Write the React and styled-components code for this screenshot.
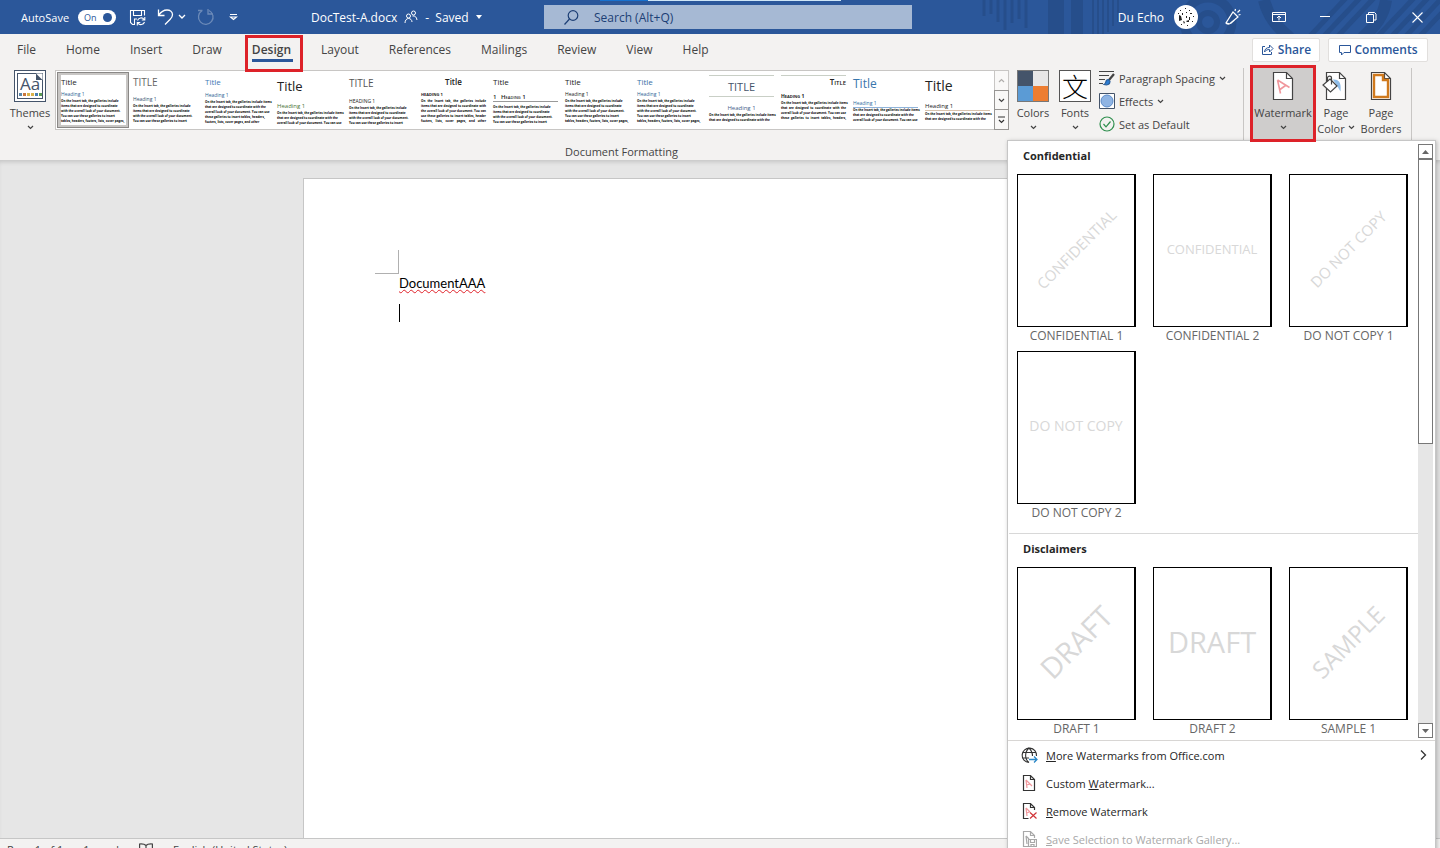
import React from "react";
import styled, { createGlobalStyle, css } from "styled-components";

const GlobalStyle = createGlobalStyle`
  * { box-sizing: border-box; }
  html, body { margin: 0; height: 100%; overflow: hidden; }
  body { font-family: "Open Sans", "Noto Sans", sans-serif; font-size: 11px; color: #444; background: #e6e6e6; }
  button, input { font: inherit; color: inherit; }
  button { background: none; border: 0; padding: 0; margin: 0; white-space: nowrap; }
  svg { display: block; flex: none; }
`;

const Shell = styled.div`
  position: relative;
  display: flex;
  flex-direction: column;
  height: calc(100vh + 12px);
`;

/* ---------- title bar ---------- */
const TitleBar = styled.header`
  position: relative;
  display: grid;
  grid-template-columns: 544fr 368fr 528fr;
  height: 34px;
  background: #2b579a;
  color: #fff;
  font-size: 12px;
`;
const TitlePattern = styled.svg`
  position: absolute;
  right: 0;
  top: 0;
`;
const TitleLeft = styled.div`
  display: flex;
  align-items: center;
  padding-left: 21px;
`;
const AutoSave = styled.label`
  display: flex;
  align-items: center;
  font-size: 11px;
  width: 108px;
  justify-content: space-between;
  padding-right: 13px;
`;
const Toggle = styled.span`
  position: relative;
  display: flex;
  align-items: center;
  width: 38px;
  height: 15px;
  padding-left: 6px;
  border-radius: 8px;
  background: #fff;
  color: #2b579a;
  font-size: 9px;
  input { position: absolute; inset: 0; margin: 0; opacity: 0; }
  &::after {
    content: "";
    position: absolute;
    right: 4px;
    top: 3px;
    width: 9px;
    height: 9px;
    border-radius: 50%;
    background: #2b579a;
  }
`;
const TitleButton = styled.button`
  display: flex;
  align-items: center;
  justify-content: center;
  width: ${(p) => p.$w}px;
  height: 34px;
  opacity: ${(p) => (p.$dim ? 0.3 : 1)};
`;
const DocName = styled.div`
  display: flex;
  align-items: center;
  gap: 7px;
  margin-left: 60px;
  font-size: 12px;
  white-space: nowrap;
`;
const SearchArea = styled.div`
  position: relative;
  display: flex;
  align-items: center;
`;
const ProgressStrip = styled.div`
  position: absolute;
  left: 56px;
  top: 0;
  width: 241px;
  height: 1px;
  background: #cfe6f7;
  border-left: 48px solid #1771cf;
`;
const SearchBox = styled.label`
  display: flex;
  align-items: center;
  gap: 15px;
  width: 100%;
  height: 24px;
  padding-left: 20px;
  background: #a6b9d4;
  color: #1d3f75;
  input {
    flex: 1;
    border: 0;
    padding: 0;
    background: none;
    outline: none;
    font-size: 12px;
  }
  input::placeholder { color: #1d3f75; opacity: 1; }
`;
const TitleRight = styled.div`
  position: relative;
  display: flex;
  align-items: center;
  justify-content: flex-end;
`;
const UserName = styled.span`
  font-size: 12px;
  margin-right: 10px;
`;
const Avatar = styled.svg`
  margin-right: 12px;
`;

/* ---------- tab strip ---------- */
const TabStrip = styled.nav`
  display: flex;
  align-items: center;
  height: 31px;
  padding: 0 12px 0 2px;
  background: #f3f2f1;
`;
const Tab = styled.button`
  position: relative;
  height: 31px;
  padding: 0 15px;
  font-size: 12px;
  font-weight: ${(p) => (p.$active ? 600 : 400)};
  ${(p) =>
    p.$active &&
    css`
      &::before {
        content: "";
        position: absolute;
        left: 15px;
        right: 13px;
        bottom: 3px;
        height: 3px;
        background: #2b579a;
      }
      &::after {
        content: "";
        position: absolute;
        left: 8px;
        right: 3px;
        top: 1px;
        height: 31px;
        border: 3px solid #dd2229;
        z-index: 2;
      }
    `}
`;
const StripActions = styled.div`
  display: flex;
  gap: 8px;
  margin-left: auto;
`;
const StripAction = styled.button`
  display: flex;
  align-items: center;
  justify-content: center;
  gap: 4px;
  width: ${(p) => p.$w}px;
  height: 24px;
  background: #fff;
  border: 1px solid #e1dfdd;
  border-radius: 2px;
  color: #2b579a;
  font-size: 12px;
  font-weight: 600;
`;

/* ---------- ribbon ---------- */
const Ribbon = styled.section`
  display: flex;
  height: 95px;
  padding: 3px 28px 0 0;
  background: #f3f2f1;
  flex: none;
`;
const Group = styled.div`
  display: flex;
  flex-direction: column;
  flex: ${(p) => (p.$grow ? "1 1 0" : "0 0 168px")};
  min-width: 0;
  height: 92px;
  border-right: 1px solid #c8c6c4;
`;
const Tools = styled.div`
  display: flex;
  flex: none;
  padding-top: 2px;
  height: 75px;
`;
const GroupLabel = styled.div`
  text-align: center;
  font-size: 11px;
  line-height: 17px;
`;
const BigButton = styled.button`
  position: relative;
  display: flex;
  flex-direction: column;
  align-items: center;
  width: ${(p) => p.$w}px;
  line-height: 16px;
  svg, i { margin-bottom: 3px; }
`;
const ThemesButton = styled(BigButton)`
  margin-left: 5px;
`;
const LabelLine = styled.span`
  display: flex;
  align-items: center;
  justify-content: center;
  gap: 3px;
  height: 16px;
`;
const WatermarkButton = styled(BigButton)`
  height: 77px;
  margin: -5px 0 0 6px;
  padding-top: 2px;
  background: #cfcdcc;
  border: 3px solid #dd2229;
  z-index: 5;
`;
const Swatches = styled.i`
  display: grid;
  grid-template-columns: 1fr 1fr;
  width: 32px;
  height: 32px;
  border: 1px solid #777;
  b:nth-child(1) { background: #44546a; }
  b:nth-child(2) { background: #e7e6e6; }
  b:nth-child(3) { background: #5b9bd5; }
  b:nth-child(4) { background: #ed7d31; }
`;
const FontGlyph = styled.i`
  width: 32px;
  height: 32px;
  border: 1px solid #555;
  background: #fff;
  color: #000;
  font: normal 300 26px/30px "Noto Sans CJK SC", sans-serif;
`;
const ThemeGlyph = styled.i`
  position: relative;
  width: 32px;
  height: 32px;
  border: 1px solid #44546a;
  box-shadow: inset 0 0 0 2px #fff, inset 0 0 0 3px #44546a;
  background: #fff;
  color: #44546a;
  font: normal 400 17px/26px "Open Sans", sans-serif;
  text-align: center;
  svg { position: absolute; left: 0; top: 0; }
`;
const SmallColumn = styled.div`
  display: flex;
  flex-direction: column;
  gap: 5px;
  margin: -1px 0 0 1px;
`;
const SmallButton = styled.button`
  display: flex;
  align-items: center;
  gap: 4px;
  height: 18px;
`;

/* ---------- style gallery ---------- */
const Gallery = styled.div`
  display: flex;
  height: 60px;
  flex: none;
  border: 1px solid #c8c6c4;
  background: #fff;
  margin-right: 5px;
`;
const GalleryList = styled.div`
  display: flex;
  padding: 1px 0 0 1px;
`;
const Thumb = styled.button`
  width: 72px;
  height: 56px;
  text-align: left;
  padding: 3px 3px 3px 4px;
  background: ${(p) => (p.$selected ? "#c8c6c4" : "#fff")};
  box-shadow: ${(p) => (p.$selected ? "inset 0 0 0 1px #8a8886" : "none")};
`;
const Sheet = styled.span`
  display: block;
  height: 50px;
  padding-top: ${(p) => p.$top}px;
  background: #fff;
  border-top: 1px solid ${(p) => (p.$rule ? "#c9cfc6" : "#fff")};
`;
const SheetTitle = styled.span`
  display: block;
  height: 12px;
  line-height: 12px;
  font-size: ${(p) => p.$size}px;
  font-weight: ${(p) => p.$weight};
  font-variant: ${(p) => (p.$caps ? "small-caps" : "normal")};
  color: ${(p) => p.$color};
  text-align: ${(p) => p.$align};
`;
const TitleRule = styled.span`
  display: block;
  height: 1px;
  margin: 3px 0 -4px;
  background: #c9cfc6;
`;
const SheetHeading = styled.span`
  display: block;
  height: 8px;
  line-height: 7px;
  margin-top: ${(p) => p.$gap}px;
  margin-bottom: ${(p) => p.$after}px;
  font-size: ${(p) => p.$size}px;
  font-weight: ${(p) => p.$weight};
  font-variant: ${(p) => (p.$caps ? "small-caps" : "normal")};
  color: ${(p) => p.$color};
  text-align: ${(p) => p.$align};
  white-space: pre;
  border-bottom: ${(p) => (p.$line ? `1px solid ${p.$line}` : "0")};
`;
const SheetBody = styled.span`
  display: block;
  font-family: "Open Sans", sans-serif;
  font-size: 3px;
  font-weight: 700;
  line-height: 5px;
  color: #000;
  span { display: block; text-align-last: ${(p) => (p.$justify ? "justify" : "left")}; }
`;
const GalleryScroll = styled.div`
  display: flex;
  flex-direction: column;
  width: 15px;
  margin: -1px;
  margin-left: 1px;
  button {
    display: flex;
    align-items: center;
    justify-content: center;
    flex: 1;
    border: 1px solid #979593;
    margin-bottom: -1px;
    background: #f9f8f7;
  }
  button:first-child { border-color: #c8c6c4; }
  button:last-child { margin-bottom: 0; }
`;

/* ---------- workspace ---------- */
const Workspace = styled.main`
  flex: 1;
  display: flex;
  justify-content: center;
  padding: 18px 18px 0 0;
  background: #e6e6e6;
  box-shadow: inset 0 4px 4px -2px #c4c4c4;
  overflow: hidden;
`;
const Page = styled.article`
  width: 816px;
  padding: 71px 71px 0;
  background: #fff;
  border: 1px solid #c6c6c6;
  border-bottom: 0;
`;
const MarginCorner = styled.div`
  width: 24px;
  height: 24px;
  border: solid #b0b0b0;
  border-width: 0 1px 1px 0;
`;
const Paragraph = styled.p`
  margin: 0 0 12px 24px;
  font-family: Lato, sans-serif;
  font-size: 13px;
  line-height: 18px;
  color: #000;
  span { text-decoration: underline wavy #e0222a 1px; text-underline-offset: 1px; text-decoration-skip-ink: none; }
`;
const TextCaret = styled.div`
  width: 1px;
  height: 18px;
  margin-left: 24px;
  background: #000;
`;
const StatusBar = styled.footer`
  display: flex;
  align-items: center;
  gap: 20px;
  height: 22px;
  padding-left: 7px;
  background: #f3f2f1;
  border-top: 1px solid #c6c6c6;
  font-size: 11px;
  white-space: nowrap;
`;

/* ---------- watermark menu ---------- */
const Menu = styled.aside`
  position: absolute;
  right: 4px;
  top: 140px;
  bottom: 0;
  width: 429px;
  display: flex;
  flex-direction: column;
  background: #fff;
  border: 1px solid #c6c6c6;
  box-shadow: 1px 1px 4px rgba(0, 0, 0, 0.25);
  color: #262626;
  z-index: 3;
`;
const MenuScroller = styled.div`
  display: flex;
  height: 600px;
  flex: none;
  border-bottom: 1px solid #d8d6d4;
  overflow: hidden;
`;
const MenuSections = styled.div`
  flex: 1;
  padding-left: 1px;
  overflow: hidden;
`;
const Section = styled.section`
  padding: 0 0 5px 8px;
  & + & { border-top: 1px solid #d8d8d8; }
`;
const SectionTitle = styled.h2`
  margin: 0;
  padding-left: 6px;
  height: 33px;
  line-height: 30px;
  font-size: 11px;
  font-weight: 700;
`;
const Cards = styled.div`
  display: grid;
  grid-template-columns: repeat(3, 119px);
  column-gap: 17px;
`;
const Card = styled.button`
  display: flex;
  flex-direction: column;
  justify-content: flex-start;
  align-items: stretch;
  height: 177px;
  color: #666;
  font-size: 12px;
  line-height: 18px;
  text-align: center;
`;
const Preview = styled.span`
  display: flex;
  align-items: center;
  justify-content: center;
  height: 153px;
  flex: none;
  padding-bottom: 4px;
  border: 1px solid #000;
  border-right-width: 2px;
  color: #d8d8d8;
  font-size: ${(p) => p.$size}px;
  span { transform: rotate(${(p) => (p.$diagonal ? -45 : 0)}deg); }
`;
const ScrollTrack = styled.div`
  display: flex;
  flex-direction: column;
  width: 15px;
  margin: 3px 2px 2px 0;
  background: #e6e6e6;
`;
const ScrollButton = styled.button`
  display: flex;
  align-items: center;
  justify-content: center;
  height: 15px;
  background: #fff;
  border: 1px solid #777;
`;
const ScrollThumb = styled.div`
  height: 285px;
  margin-bottom: auto;
  background: #fff;
  border: 1px solid #777;
`;
const MenuItem = styled.button`
  display: flex;
  align-items: center;
  flex: none;
  height: 28px;
  padding: 0 8px 0 13px;
  color: ${(p) => (p.disabled ? "#a8a8a8" : "#262626")};
  > svg:last-child { margin-left: auto; }
`;
const MenuIcon = styled.span`
  width: 25px;
`;

const Chevron = ({ color = "#444", up }) => (
  <svg width="7" height="5" viewBox="0 0 7 5" fill="none" stroke={color} strokeWidth="1.2">
    <path d={up ? "M1 4l2.500-2.500L6 4" : "M1 1l2.500 2.500L6 1"} />
  </svg>
);

const DocShape = ({ children }) => (
  <svg width="32" height="32" viewBox="0 0 32 32" fill="none" stroke="#444" strokeWidth="1.2">
    <path d="M6.5 2.5h13l6 6v21h-19z" fill="#fff" />
    <path d="M19.5 2.5v6h6" />
    {children}
  </svg>
);

const wide = [
  "On the Insert tab, the galleries include",
  "items that are designed to coordinate",
  "with the overall look of your document.",
  "You can use these galleries to insert",
  "tables, headers, footers, lists, cover pages,",
];
const compact = [
  "On the Insert tab, the galleries include items",
  "that are designed to coordinate with the",
  "overall look of your document. You can use",
  "these galleries to insert tables, headers,",
  "footers, lists, cover pages, and other",
];
const justified = [
  "On the Insert tab, the galleries include",
  "items that are designed to coordinate with",
  "the overall look of your document. You can",
  "use these galleries to insert tables, header",
  "footers, lists, cover pages, and other",
];

const thumbs = [
  { t: "Title", size: 8, h: "Heading 1", hc: "#2e5f94", gap: 3, body: wide, n: 5 },
  { t: "TITLE", size: 10, tc: "#666", h: "Heading 1", hs: 5, hc: "#34506f", gap: 8, body: wide, n: 4 },
  { t: "Title", size: 8, tc: "#3f78b5", h: "Heading 1", hc: "#2e5f94", gap: 4, body: compact, n: 5 },
  { t: "Title", size: 13, top: 4, h: "Heading 1", hs: 6, hc: "#4a7335", gap: 11, body: compact, n: 3 },
  { t: "TITLE", size: 10, tc: "#555", top: 1, h: "HEADING 1", gap: 9, body: wide, n: 4 },
  { t: "Title", size: 8, tw: 600, align: "center", h: "HEADING 1", hs: 4, hw: 700, gap: 3, body: justified, n: 5, justify: true },
  { t: "Title", size: 8, h: "1   Heading 1", hs: 6, hw: 600, caps: true, line: "#999", gap: 6, after: 3, body: wide, n: 4 },
  { t: "Title", size: 8, h: "Heading 1", gap: 3, body: wide, n: 5 },
  { t: "Title", size: 8, tc: "#3a6ea5", h: "Heading 1", hc: "#2e5f94", gap: 3, body: wide, n: 5 },
  { t: "TITLE", size: 11, tc: "#44546a", top: 5, rule: true, underTitle: true, align: "center", h: "Heading 1", hs: 6, ha: "center", hc: "#44618a", gap: 12, body: compact, n: 2 },
  { t: "Title", size: 8, tw: 600, tcaps: true, rule: true, align: "right", h: "Heading 1", hw: 700, caps: true, gap: 5, body: compact, n: 4, justify: true },
  { t: "Title", size: 12, tc: "#3a76ac", top: 2, h: "Heading 1", hs: 5, hc: "#2e6c9e", line: "#8fb3d9", gap: 10, body: compact, n: 3 },
  { t: "Title", size: 14, top: 4, h: "Heading 1", hs: 6, line: "#d9c3ad", gap: 11, after: 1, body: compact, n: 2 },
];

const StyleThumb = ({ d, selected }) => (
  <Thumb $selected={selected}>
    <Sheet $top={d.top || 0} $rule={d.rule}>
      <SheetTitle $size={d.size} $weight={d.tw || 400} $caps={d.tcaps} $color={d.tc || "#222"} $align={d.align || "left"}>
        {d.t}
      </SheetTitle>
      {d.underTitle && <TitleRule />}
      <SheetHeading
        $size={d.hs || 5}
        $gap={d.gap}
        $after={d.after || 0}
        $weight={d.hw || 400}
        $caps={d.caps}
        $color={d.hc || "#222"}
        $align={d.ha || "left"}
        $line={d.line}
      >
        {d.h}
      </SheetHeading>
      <SheetBody $justify={d.justify}>
        {d.body.slice(0, d.n).map((line) => (
          <span key={line}>{line}</span>
        ))}
      </SheetBody>
    </Sheet>
  </Thumb>
);

const sections = [
  {
    title: "Confidential",
    cards: [
      { label: "CONFIDENTIAL 1", text: "CONFIDENTIAL", size: 15, diagonal: true },
      { label: "CONFIDENTIAL 2", text: "CONFIDENTIAL", size: 13 },
      { label: "DO NOT COPY 1", text: "DO NOT COPY", size: 15, diagonal: true },
      { label: "DO NOT COPY 2", text: "DO NOT COPY", size: 14 },
    ],
  },
  {
    title: "Disclaimers",
    cards: [
      { label: "DRAFT 1", text: "DRAFT", size: 29, diagonal: true },
      { label: "DRAFT 2", text: "DRAFT", size: 29 },
      { label: "SAMPLE 1", text: "SAMPLE", size: 24, diagonal: true },
    ],
  },
];

const tabs = ["File", "Home", "Insert", "Draw", "Design", "Layout", "References", "Mailings", "Review", "View", "Help"];

const SmallDoc = ({ color = "#333", children }) => (
  <svg width="16" height="18" viewBox="0 0 16 18" fill="none" stroke={color} strokeWidth="1.2">
    <path d="M13.5 8V5.500l-4-4h-7v15h5M9.500 1.500v4h4" />
    {children}
  </svg>
);

export default function App() {
  return (
    <Shell>
      <GlobalStyle />
      <TitleBar>
        <TitlePattern width="460" height="34" viewBox="0 0 460 34" fill="none" stroke="#264e8b">
          <path strokeWidth="3" d="M4 0v16M11 0v14M18 0v22M25 0v30M32 0v23M39 0v19M46 0v28" />
          <path strokeWidth="16" d="M76 0v34" />
          <path strokeWidth="12" d="M97 0v34" />
          <path strokeWidth="2" d="M113 0v34M118 0v34M123 0v34M128 0v32M133 0v26M138 0v22" />
          <circle cx="228" cy="22" r="9" strokeWidth="6" />
          <circle cx="228" cy="22" r="24" strokeWidth="9" />
          <path strokeWidth="12" d="M284 0c4 16 12 26 26 38M406 0c-2 15-10 26-24 38" />
          <path strokeWidth="5" d="M330 36l36-38M344 36l36-38M358 36l36-38M398 36l36-38M412 36l36-38M426 36l36-38M440 36l36-38" />
        </TitlePattern>
        <TitleLeft>
          <AutoSave>
            AutoSave
            <Toggle>
              On
              <input type="checkbox" defaultChecked aria-label="AutoSave" />
            </Toggle>
          </AutoSave>
          <TitleButton $w={16} aria-label="Save">
            <svg width="17" height="17" viewBox="0 0 17 17" fill="none" stroke="#fff" strokeWidth="1.1">
              <path d="M15.5 6.500v-5h-14v12l2 2h2.500M4.500 1.500v5h8v-5M5.500 15v-5h2.500" />
              <path d="M8.500 11.500a3.800 3.800 0 0 1 6.700-1M15.800 8v3h-3M15.500 13a3.800 3.800 0 0 1-6.700 1M8.300 16.500v-3h3" />
            </svg>
          </TitleButton>
          <TitleButton $w={52} aria-label="Undo">
            <svg width="30" height="18" viewBox="0 0 30 18" fill="none" stroke="#fff" strokeWidth="1.3">
              <path d="M2.500 1.500v6h6M2.800 7.200C5.500 3 8.500 2 11 2c3 0 5.500 2 5.500 4.700 0 2-1 3.300-2.500 4.800L9 16.500M23 7l3 3 3-3" />
            </svg>
          </TitleButton>
          <TitleButton $w={18} $dim aria-label="Redo">
            <svg width="18" height="18" viewBox="0 0 18 18" fill="none" stroke="#fff" strokeWidth="1.3">
              <path d="M11 1v5h5M12 2.500a7.300 7.300 0 1 1-7 .3M1 2.500h4.500" />
            </svg>
          </TitleButton>
          <TitleButton $w={36} aria-label="Customize toolbar">
            <svg width="9" height="8" viewBox="0 0 9 8" fill="none" stroke="#fff" strokeWidth="1.2">
              <path d="M1 1.500h7M1.500 4L4.500 6.500l3-2.500z" />
            </svg>
          </TitleButton>
          <DocName>
            DocTest-A.docx
            <svg width="14" height="14" viewBox="0 0 14 14" fill="none" stroke="#fff">
              <circle cx="9.5" cy="3" r="2" />
              <circle cx="4.500" cy="6" r="2" />
              <path d="M1 13c0-2.600 1.500-4.500 3.500-4.500S8 10 8 12M8.500 6c2.500-.5 4 1 4.500 4" />
            </svg>
            <span>- &nbsp;Saved</span>
            <svg width="7" height="4" viewBox="0 0 7 4" fill="#fff">
              <path d="M0 0h6L3 4z" />
            </svg>
          </DocName>
        </TitleLeft>
        <SearchArea>
          <ProgressStrip />
          <SearchBox>
            <svg width="15" height="15" viewBox="0 0 15 15" fill="none" stroke="#1d3f75" strokeWidth="1.2">
              <circle cx="9" cy="5.500" r="4.800" />
              <path d="M5.500 9L.5 14.500" />
            </svg>
            <input type="text" placeholder="Search (Alt+Q)" aria-label="Search" />
          </SearchBox>
        </SearchArea>
        <TitleRight>
          <UserName>Du Echo</UserName>
          <Avatar width="24" height="24" viewBox="0 0 24 24">
            <circle cx="12" cy="12" r="12" fill="#fff" />
            <path
              fill="#222"
              d="M5 10l2 1 1 4-3 1zM8 8h1v2H8zM12 16l3-1v2h-2zM15 12h1v3h-1zM9 16l2 1-1 2zM16 8h2v1h-2zM12 11h1v2h-1zM6 5h1v1H6zM11 3h1v1h-1zM15 5h1v1h-1zM19 11h1v1h-1zM4 8h1v1H4zM18 16h1v1h-1zM13 20h1v1h-1zM7 19h1v1H7zM12 7h1v1h-1z"
            />
          </Avatar>
          <TitleButton $w={46} aria-label="Coming soon">
            <svg width="18" height="18" viewBox="0 0 18 18" fill="none" stroke="#fff" strokeWidth="1.2">
              <path d="M9 4l5 5-8 6.500c-1.500 1-4 .5-4-.5L9 4zM2 14.500L5.500 16M6.500 15.500l4-3.500M11 3l.5-2M13.500 4.500L16 2M14.500 7l2-.5" />
            </svg>
          </TitleButton>
          <TitleButton $w={46} aria-label="Ribbon display options">
            <svg width="14" height="12" viewBox="0 0 14 12" fill="none" stroke="#fff">
              <path d="M.5 1.500h13v9H.5zM.5 3.500h13M7 9.500V5M5 7l2-2 2 2" />
            </svg>
          </TitleButton>
          <TitleButton $w={46} aria-label="Minimize">
            <svg width="10" height="10" viewBox="0 0 10 10" stroke="#fff">
              <path d="M0 4.500h10" />
            </svg>
          </TitleButton>
          <TitleButton $w={46} aria-label="Restore">
            <svg width="11" height="11" viewBox="0 0 11 11" fill="none" stroke="#fff">
              <path d="M.5 2.500h7v8h-7zM2.500 2.500v-2h6l1.500 1.500v6H8" />
            </svg>
          </TitleButton>
          <TitleButton $w={46} aria-label="Close">
            <svg width="11" height="11" viewBox="0 0 11 11" stroke="#fff" strokeWidth="1.1">
              <path d="M.5.500l10 10M10.500.500l-10 10" />
            </svg>
          </TitleButton>
        </TitleRight>
      </TitleBar>

      <TabStrip>
        {tabs.map((t) => (
          <Tab key={t} $active={t === "Design"}>
            {t}
          </Tab>
        ))}
        <StripActions>
          <StripAction $w={68}>
            <svg width="13" height="13" viewBox="0 0 13 13" fill="none" stroke="#2b579a">
              <path d="M4 3.500H1.500v8h9V9M3.500 9c.3-3 2-4.500 5-4.500V2l3.500 3.500L8.500 9V6.500c-2 0-3.500.5-5 2.500z" />
            </svg>
            Share
          </StripAction>
          <StripAction $w={100}>
            <svg width="12" height="12" viewBox="0 0 12 12" fill="none" stroke="#2b579a">
              <path d="M.5 1.500h11v7H5L2.500 11V8.500h-2z" />
            </svg>
            Comments
          </StripAction>
        </StripActions>
      </TabStrip>

      <Ribbon>
        <Group $grow>
          <Tools>
            <ThemesButton $w={50}>
              <ThemeGlyph>
                Aa
                <svg width="30" height="30" viewBox="0 0 30 30">
                  <path d="M21 2.500h6.500v6.500z" fill="#fff" />
                  <path d="M21 2.500v6.500h6.500z" fill="#44546a" />
                  <path d="M4 22h3v3H4z" fill="#5b87a8" />
                  <path d="M8 22h3v3H8z" fill="#c9783e" />
                  <path d="M12 22h3v3h-3z" fill="#d9b24a" />
                  <path d="M16 22h3v3h-3z" fill="#d9b24a" />
                  <path d="M20 22h3v3h-3z" fill="#4a7fb5" />
                  <path d="M24 22h3v3h-3z" fill="#5c9c54" />
                </svg>
              </ThemeGlyph>
              <LabelLine>Themes</LabelLine>
              <LabelLine>
                <Chevron />
              </LabelLine>
            </ThemesButton>
            <Gallery>
              <GalleryList>
                {thumbs.map((d, i) => (
                  <StyleThumb key={i} d={d} selected={i === 0} />
                ))}
              </GalleryList>
              <GalleryScroll>
                <button aria-label="Previous row">
                  <Chevron up color="#b0aeac" />
                </button>
                <button aria-label="Next row">
                  <Chevron />
                </button>
                <button aria-label="More styles">
                  <svg width="7" height="8" viewBox="0 0 7 8" fill="none" stroke="#333" strokeWidth="1.2">
                    <path d="M0 1h7M1 4l2.500 2.500L6 4" />
                  </svg>
                </button>
              </GalleryScroll>
            </Gallery>
            <BigButton $w={38}>
              <Swatches>
                <b />
                <b />
                <b />
                <b />
              </Swatches>
              <LabelLine>Colors</LabelLine>
              <LabelLine>
                <Chevron />
              </LabelLine>
            </BigButton>
            <BigButton $w={46}>
              <FontGlyph>文</FontGlyph>
              <LabelLine>Fonts</LabelLine>
              <LabelLine>
                <Chevron />
              </LabelLine>
            </BigButton>
            <SmallColumn>
              <SmallButton>
                <svg width="16" height="16" viewBox="0 0 16 16" fill="none" stroke="#444" strokeWidth="1.2">
                  <path d="M0 1.500h15M0 5.500h10M0 9.500h6M0 13.500h4" />
                  <path d="M15 4l-5 6" strokeWidth="2.2" />
                  <path d="M9.500 9.500c-2 0-2.500 1-2.700 2.500-.3 1.500-1 2-1.800 2.500 3 .8 6 .2 6-3z" fill="#2b7cd3" stroke="#2b5f9a" />
                </svg>
                Paragraph Spacing
                <Chevron />
              </SmallButton>
              <SmallButton>
                <svg width="16" height="16" viewBox="0 0 16 16" fill="#fff" stroke="#44546a">
                  <path d="M.5.500h15v15H.5z" />
                  <circle cx="8" cy="8" r="6" fill="#8fb4e3" stroke="#5b8bc9" />
                </svg>
                Effects
                <Chevron />
              </SmallButton>
              <SmallButton>
                <svg width="16" height="16" viewBox="0 0 16 16" fill="none" stroke="#2f8f4e" strokeWidth="1.2">
                  <circle cx="8" cy="8" r="7" />
                  <path d="M4.500 8l2.500 2.800L11.500 5.500" />
                </svg>
                Set as Default
              </SmallButton>
            </SmallColumn>
          </Tools>
          <GroupLabel>Document Formatting</GroupLabel>
        </Group>
        <Group>
          <Tools>
            <WatermarkButton $w={66}>
              <DocShape>
                <path d="M10.500 10l12 7.500M10.500 10l3 13.500M13 19.500l5.500-4" stroke="#f0979c" strokeWidth="1.6" />
              </DocShape>
              <LabelLine>Watermark</LabelLine>
              <LabelLine>
                <Chevron />
              </LabelLine>
            </WatermarkButton>
            <BigButton $w={40}>
              <DocShape>
                <path d="M14 10c4 0 6.500 2.500 6 9.500l-3-5z" fill="#8dbce8" stroke="#8dbce8" />
                <path d="M10 9l7 7-6.500 6L3 15z" fill="#fff" />
                <path d="M7.500 11.500V8c0-2.500 4-2.500 4 0v6.500" />
              </DocShape>
              <LabelLine>Page</LabelLine>
              <LabelLine>
                Color <Chevron />
              </LabelLine>
            </BigButton>
            <BigButton $w={50}>
              <DocShape>
                <path d="M9 5h9v5h5v17H9z" stroke="#d07a1e" strokeWidth="2.4" />
              </DocShape>
              <LabelLine>Page</LabelLine>
              <LabelLine>Borders</LabelLine>
            </BigButton>
          </Tools>
        </Group>
      </Ribbon>

      <Workspace>
        <Page>
          <MarginCorner />
          <Paragraph>
            <span>DocumentAAA</span>
          </Paragraph>
          <TextCaret />
        </Page>
      </Workspace>

      <StatusBar>
        <span>Page 1 of 1</span>
        <span>1 word</span>
        <svg width="14" height="13" viewBox="0 0 14 13" fill="none" stroke="#444" strokeWidth="1.2">
          <path d="M7 2.500C5.500 1 3 .8.6 1v10c2.500 0 5 .3 6.400 1.500C8.500 11 11 11 13.400 11V1C11 .8 8.500 1 7 2.500zM7 2.500v10" />
        </svg>
        <span>English (United States)</span>
      </StatusBar>

      <Menu>
        <MenuScroller>
          <MenuSections>
            {sections.map((s) => (
              <Section key={s.title}>
                <SectionTitle>{s.title}</SectionTitle>
                <Cards>
                  {s.cards.map((c) => (
                    <Card key={c.label}>
                      <Preview $size={c.size} $diagonal={c.diagonal}>
                        <span>{c.text}</span>
                      </Preview>
                      {c.label}
                    </Card>
                  ))}
                </Cards>
              </Section>
            ))}
          </MenuSections>
          <ScrollTrack>
            <ScrollButton aria-label="Scroll up">
              <svg width="7" height="4" viewBox="0 0 7 4" fill="#666">
                <path d="M0 4h7L3.500 0z" />
              </svg>
            </ScrollButton>
            <ScrollThumb />
            <ScrollButton aria-label="Scroll down">
              <svg width="7" height="4" viewBox="0 0 7 4" fill="#666">
                <path d="M0 0h7L3.500 4z" />
              </svg>
            </ScrollButton>
          </ScrollTrack>
        </MenuScroller>
        <MenuItem>
          <MenuIcon>
            <svg width="17" height="17" viewBox="0 0 17 17" fill="none" stroke="#333" strokeWidth="1.1">
              <path d="M15.500 9A7.200 7.200 0 1 0 8 15.500M1.500 5.500h13.500M1.500 11H8M8 1C3.500 5 3.500 12 8 15.500M8 1c2.500 2.500 3.500 5 3.500 8" />
              <path d="M8 12.500h8M13 9.500l3 3-3 3" stroke="#2b88c8" strokeWidth="1.3" />
            </svg>
          </MenuIcon>
          <span>
            <u>M</u>ore Watermarks from Office.com
          </span>
          <svg width="7" height="12" viewBox="0 0 7 12" fill="none" stroke="#333" strokeWidth="1.3">
            <path d="M1 1.500L5.500 6 1 10.500" />
          </svg>
        </MenuItem>
        <MenuItem>
          <MenuIcon>
            <SmallDoc>
              <path d="M7 16.500h6.500V8" />
              <path d="M5 6l1 8M5 6l6 6M5.500 11l4-1" stroke="#f0979c" />
            </SmallDoc>
          </MenuIcon>
          <span>
            Custom <u>W</u>atermark...
          </span>
        </MenuItem>
        <MenuItem>
          <MenuIcon>
            <SmallDoc>
              <path d="M5 6l1 8M5 6l4 4M5.500 11l3-1" stroke="#f0979c" />
              <path d="M9 10.500l6.500 6M15.500 10.500l-6.500 6" stroke="#d13438" />
            </SmallDoc>
          </MenuIcon>
          <span>
            <u>R</u>emove Watermark
          </span>
        </MenuItem>
        <MenuItem disabled>
          <MenuIcon>
            <SmallDoc color="#a8a8a8">
              <path d="M5 6l1 8M5 6l3 3" />
              <path d="M7.500 9.500h8v7h-8zM9.500 9.500v3h4v-3M10 16.500v-2h3v2" fill="#fff" />
            </SmallDoc>
          </MenuIcon>
          <span>
            <u>S</u>ave Selection to Watermark Gallery...
          </span>
        </MenuItem>
      </Menu>
    </Shell>
  );
}
